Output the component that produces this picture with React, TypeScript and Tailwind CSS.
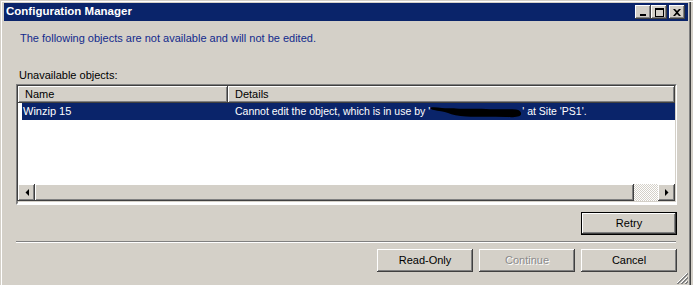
import React from "react";

const raised =
  "shadow-[inset_-1px_-1px_0_#404040,inset_1px_1px_0_#ffffff,inset_-2px_-2px_0_#808080,inset_2px_2px_0_#d4d0c8]";

function TitleButton({ children, className = "" }: { children: React.ReactNode; className?: string }) {
  return (
    <div className={`w-[16px] h-[14px] bg-[#d4d0c8] flex items-center justify-center ${raised} ${className}`}>
      {children}
    </div>
  );
}

function Button({ label, disabled = false, isDefault = false }: { label: string; disabled?: boolean; isDefault?: boolean }) {
  return (
    <div
      className={`w-[96px] h-[23px] bg-[#d4d0c8] flex items-center justify-center text-[11px] ${
        isDefault ? "border border-black" : ""
      } ${raised}`}
    >
      <span
        className={
          disabled
            ? "text-[#8a8a8a] [text-shadow:1px_1px_0_#ffffff]"
            : "text-black"
        }
      >
        {label}
      </span>
    </div>
  );
}

export default function App() {
  return (
    <div
      className="relative w-[693px] h-[285px] overflow-hidden bg-[#d4d0c8] shadow-[inset_1px_1px_0_#d4d0c8,inset_2px_2px_0_#ffffff,inset_-2px_0_0_#d4d0c8,inset_-3px_0_0_#404040,inset_-4px_0_0_#808080]"
      style={{ fontFamily: '"Liberation Sans", Arial, sans-serif' }}
    >
      <div className="flex flex-col pl-[4px] pt-[3px] pr-[5px]">
        {/* Title bar */}
        <div className="h-[18px] bg-[#0a246a] flex items-center justify-between pl-[2px] pr-[3px]">
          <span className="text-white font-bold text-[11.5px] leading-none">Configuration Manager</span>
          <div className="flex items-center">
            <TitleButton>
              <svg width="8" height="7" viewBox="0 0 8 7">
                <rect x="1" y="5" width="6" height="2" fill="#000" />
              </svg>
            </TitleButton>
            <TitleButton>
              <svg width="9" height="9" viewBox="0 0 9 9">
                <rect x="0.5" y="0.5" width="8" height="8" fill="none" stroke="#000" />
                <rect x="0" y="0" width="9" height="2" fill="#000" />
              </svg>
            </TitleButton>
            <TitleButton className="ml-[2px]">
              <svg width="8" height="7" viewBox="0 0 8 7">
                <path d="M0 0h2l2 2 2-2h2L5 3.5 8 7H6L4 5 2 7H0l3-3.5z" fill="#000" />
              </svg>
            </TitleButton>
          </div>
        </div>

        {/* Body */}
        <div className="flex flex-col pl-[12px] pr-[11px]">
          <div className="mt-[10px] ml-[4px] h-[14px] leading-[14px] text-[11px] text-[#122a8c]">
            The following objects are not available and will not be edited.
          </div>
          <div className="mt-[23px] ml-[3px] h-[14px] leading-[14px] text-[11px] text-black">
            Unavailable objects:
          </div>

          {/* List view */}
          <div className="mt-[2px] h-[121px] bg-white border-2 border-t-[#808080] border-l-[#808080] border-b-white border-r-white">
            <div className="h-full flex flex-col border border-t-[#404040] border-l-[#404040] border-b-[#d4d0c8] border-r-[#d4d0c8] -m-px">
              <div className="flex h-[17px] text-[11px] shrink-0">
                <div className={`w-[210px] bg-[#d4d0c8] pl-[7px] flex items-center ${raised}`}>Name</div>
                <div className={`flex-1 bg-[#d4d0c8] pl-[7px] flex items-center ${raised}`}>Details</div>
              </div>
              <div className="flex h-[17px] ml-[4px] bg-[#0a246a] text-white text-[11px] shrink-0">
                <div className="w-[206px] pl-[1px] flex items-center">Winzip 15</div>
                <div className="flex-1 pl-[7px] flex items-center whitespace-nowrap text-[10.5px]">
                  <span>Cannot edit the object, which is in use by '</span>
                  <svg width="92" height="12" viewBox="0 0 92 12" className="shrink-0">
                    <path
                      d="M1 1.5 C4 1 8 1.5 12 2 C16 2.5 20 2 26 2.5 C34 3 44 2.5 56 3 C68 3.5 78 3 86 3.5 C90 4 91.5 6 91 8.5 C90 11 84 11.5 76 11 C62 10.5 48 11 36 10.5 C28 10 22 9 18 7 C14 5.5 8 5 4 4 C1 3.5 0 2.5 1 1.5 Z"
                      fill="#000"
                    />
                  </svg>
                  <span>' at Site 'PS1'.</span>
                </div>
              </div>
              <div className="flex-1" />
              {/* Horizontal scrollbar */}
              <div className="flex h-[17px] shrink-0">
                <div className={`w-[17px] bg-[#d4d0c8] flex items-center justify-center ${raised}`}>
                  <svg width="4" height="7" viewBox="0 0 4 7">
                    <path d="M4 0v7L0.5 3.5z" fill="#000" />
                  </svg>
                </div>
                <div className={`w-[599px] bg-[#d4d0c8] ${raised}`} />
                <div className="flex-1 bg-[repeating-conic-gradient(#ffffff_0%_25%,#d4d0c8_0%_50%)] bg-[length:2px_2px]" />
                <div className={`w-[17px] bg-[#d4d0c8] flex items-center justify-center ${raised}`}>
                  <svg width="4" height="7" viewBox="0 0 4 7">
                    <path d="M0 0v7l3.5-3.5z" fill="#000" />
                  </svg>
                </div>
              </div>
            </div>
          </div>

          <div className="mt-[7px] self-end">
            <Button label="Retry" isDefault />
          </div>

          <div className="mt-[6px] mr-[1px] h-[2px] border-t border-t-[#808080] border-b border-b-white" />

          <div className="mt-[6px] flex justify-end gap-[6px]">
            <Button label="Read-Only" />
            <Button label="Continue" disabled />
            <Button label="Cancel" />
          </div>
        </div>
      </div>

      {/* Size grip */}
      <svg className="absolute right-[5px] bottom-[1px]" width="12" height="12" viewBox="0 0 12 12">
        <path d="M11 1L1 11M11 5L5 11M11 9L9 11" stroke="#ffffff" strokeWidth="1" />
        <path d="M12 1L1 12M12 2L2 12M12 5L5 12M12 6L6 12M12 9L9 12M12 10L10 12" stroke="#808080" strokeWidth="1" />
      </svg>
    </div>
  );
}
